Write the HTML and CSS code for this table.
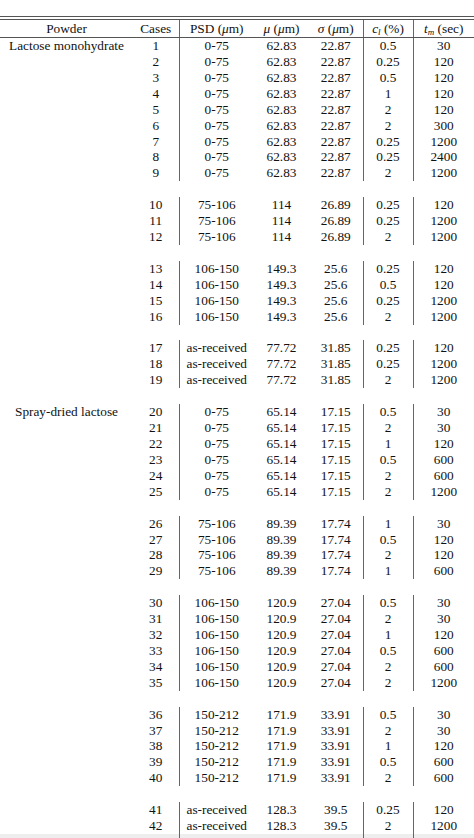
FILE: index.html
```html
<!DOCTYPE html>
<html>
<head>
<meta charset="utf-8">
<link rel="stylesheet" href="styles.css">
</head>
<body>
<div class="page">
  <div class="caption-clip"></div>
  <div class="rule-double"></div>
  <table class="tbl">
    <colgroup>
      <col class="w-powder"><col class="w-cases"><col class="w-psd"><col class="w-mu"><col class="w-sigma"><col class="w-cl"><col class="w-tm">
    </colgroup>
    <thead>
      <tr>
        <th>Powder</th><th>Cases</th><th class="vl">PSD (<i>μ</i>m)</th><th><i>μ</i> (<i>μ</i>m)</th><th><i>σ</i> (<i>μ</i>m)</th><th class="vl"><i>c<sub>l</sub></i> (%)</th><th class="vl"><i>t<sub>m</sub></i> (sec)</th>
      </tr>
    </thead>
    <tbody>
      <tr><td>Lactose monohydrate</td><td>1</td><td class="vl">0-75</td><td>62.83</td><td>22.87</td><td class="vl">0.5</td><td class="vl">30</td></tr>
      <tr><td></td><td>2</td><td class="vl">0-75</td><td>62.83</td><td>22.87</td><td class="vl">0.25</td><td class="vl">120</td></tr>
      <tr><td></td><td>3</td><td class="vl">0-75</td><td>62.83</td><td>22.87</td><td class="vl">0.5</td><td class="vl">120</td></tr>
      <tr><td></td><td>4</td><td class="vl">0-75</td><td>62.83</td><td>22.87</td><td class="vl">1</td><td class="vl">120</td></tr>
      <tr><td></td><td>5</td><td class="vl">0-75</td><td>62.83</td><td>22.87</td><td class="vl">2</td><td class="vl">120</td></tr>
      <tr><td></td><td>6</td><td class="vl">0-75</td><td>62.83</td><td>22.87</td><td class="vl">2</td><td class="vl">300</td></tr>
      <tr><td></td><td>7</td><td class="vl">0-75</td><td>62.83</td><td>22.87</td><td class="vl">0.25</td><td class="vl">1200</td></tr>
      <tr><td></td><td>8</td><td class="vl">0-75</td><td>62.83</td><td>22.87</td><td class="vl">0.25</td><td class="vl">2400</td></tr>
      <tr><td></td><td>9</td><td class="vl">0-75</td><td>62.83</td><td>22.87</td><td class="vl">2</td><td class="vl">1200</td></tr>
      <tr class="gap"><td colspan="7"></td></tr>
      <tr><td></td><td>10</td><td class="vl">75-106</td><td>114</td><td>26.89</td><td class="vl">0.25</td><td class="vl">120</td></tr>
      <tr><td></td><td>11</td><td class="vl">75-106</td><td>114</td><td>26.89</td><td class="vl">0.25</td><td class="vl">1200</td></tr>
      <tr><td></td><td>12</td><td class="vl">75-106</td><td>114</td><td>26.89</td><td class="vl">2</td><td class="vl">1200</td></tr>
      <tr class="gap"><td colspan="7"></td></tr>
      <tr><td></td><td>13</td><td class="vl">106-150</td><td>149.3</td><td>25.6</td><td class="vl">0.25</td><td class="vl">120</td></tr>
      <tr><td></td><td>14</td><td class="vl">106-150</td><td>149.3</td><td>25.6</td><td class="vl">0.5</td><td class="vl">120</td></tr>
      <tr><td></td><td>15</td><td class="vl">106-150</td><td>149.3</td><td>25.6</td><td class="vl">0.25</td><td class="vl">1200</td></tr>
      <tr><td></td><td>16</td><td class="vl">106-150</td><td>149.3</td><td>25.6</td><td class="vl">2</td><td class="vl">1200</td></tr>
      <tr class="gap"><td colspan="7"></td></tr>
      <tr><td></td><td>17</td><td class="vl">as-received</td><td>77.72</td><td>31.85</td><td class="vl">0.25</td><td class="vl">120</td></tr>
      <tr><td></td><td>18</td><td class="vl">as-received</td><td>77.72</td><td>31.85</td><td class="vl">0.25</td><td class="vl">1200</td></tr>
      <tr><td></td><td>19</td><td class="vl">as-received</td><td>77.72</td><td>31.85</td><td class="vl">2</td><td class="vl">1200</td></tr>
      <tr class="gap"><td colspan="7"></td></tr>
      <tr><td>Spray-dried lactose</td><td>20</td><td class="vl">0-75</td><td>65.14</td><td>17.15</td><td class="vl">0.5</td><td class="vl">30</td></tr>
      <tr><td></td><td>21</td><td class="vl">0-75</td><td>65.14</td><td>17.15</td><td class="vl">2</td><td class="vl">30</td></tr>
      <tr><td></td><td>22</td><td class="vl">0-75</td><td>65.14</td><td>17.15</td><td class="vl">1</td><td class="vl">120</td></tr>
      <tr><td></td><td>23</td><td class="vl">0-75</td><td>65.14</td><td>17.15</td><td class="vl">0.5</td><td class="vl">600</td></tr>
      <tr><td></td><td>24</td><td class="vl">0-75</td><td>65.14</td><td>17.15</td><td class="vl">2</td><td class="vl">600</td></tr>
      <tr><td></td><td>25</td><td class="vl">0-75</td><td>65.14</td><td>17.15</td><td class="vl">2</td><td class="vl">1200</td></tr>
      <tr class="gap"><td colspan="7"></td></tr>
      <tr><td></td><td>26</td><td class="vl">75-106</td><td>89.39</td><td>17.74</td><td class="vl">1</td><td class="vl">30</td></tr>
      <tr><td></td><td>27</td><td class="vl">75-106</td><td>89.39</td><td>17.74</td><td class="vl">0.5</td><td class="vl">120</td></tr>
      <tr><td></td><td>28</td><td class="vl">75-106</td><td>89.39</td><td>17.74</td><td class="vl">2</td><td class="vl">120</td></tr>
      <tr><td></td><td>29</td><td class="vl">75-106</td><td>89.39</td><td>17.74</td><td class="vl">1</td><td class="vl">600</td></tr>
      <tr class="gap"><td colspan="7"></td></tr>
      <tr><td></td><td>30</td><td class="vl">106-150</td><td>120.9</td><td>27.04</td><td class="vl">0.5</td><td class="vl">30</td></tr>
      <tr><td></td><td>31</td><td class="vl">106-150</td><td>120.9</td><td>27.04</td><td class="vl">2</td><td class="vl">30</td></tr>
      <tr><td></td><td>32</td><td class="vl">106-150</td><td>120.9</td><td>27.04</td><td class="vl">1</td><td class="vl">120</td></tr>
      <tr><td></td><td>33</td><td class="vl">106-150</td><td>120.9</td><td>27.04</td><td class="vl">0.5</td><td class="vl">600</td></tr>
      <tr><td></td><td>34</td><td class="vl">106-150</td><td>120.9</td><td>27.04</td><td class="vl">2</td><td class="vl">600</td></tr>
      <tr><td></td><td>35</td><td class="vl">106-150</td><td>120.9</td><td>27.04</td><td class="vl">2</td><td class="vl">1200</td></tr>
      <tr class="gap"><td colspan="7"></td></tr>
      <tr><td></td><td>36</td><td class="vl">150-212</td><td>171.9</td><td>33.91</td><td class="vl">0.5</td><td class="vl">30</td></tr>
      <tr><td></td><td>37</td><td class="vl">150-212</td><td>171.9</td><td>33.91</td><td class="vl">2</td><td class="vl">30</td></tr>
      <tr><td></td><td>38</td><td class="vl">150-212</td><td>171.9</td><td>33.91</td><td class="vl">1</td><td class="vl">120</td></tr>
      <tr><td></td><td>39</td><td class="vl">150-212</td><td>171.9</td><td>33.91</td><td class="vl">0.5</td><td class="vl">600</td></tr>
      <tr><td></td><td>40</td><td class="vl">150-212</td><td>171.9</td><td>33.91</td><td class="vl">2</td><td class="vl">600</td></tr>
      <tr class="gap"><td colspan="7"></td></tr>
      <tr><td></td><td>41</td><td class="vl">as-received</td><td>128.3</td><td>39.5</td><td class="vl">0.25</td><td class="vl">120</td></tr>
      <tr><td></td><td>42</td><td class="vl">as-received</td><td>128.3</td><td>39.5</td><td class="vl">2</td><td class="vl">1200</td></tr>
      <tr class="tail"><td></td><td></td><td class="vl"></td><td></td><td></td><td class="vl"></td><td class="vl"></td></tr>
    </tbody>
  </table>
</div>
</body>
</html>
```
FILE: styles.css
```css
html, body {
  margin: 0;
  padding: 0;
  background: #ffffff;
}

.page {
  width: 474px;
  height: 838px;
  overflow: hidden;
  font-family: "Liberation Serif", "Times New Roman", serif;
  font-size: 13.3px;
  color: #111111;
}

.caption-clip {
  height: 16px;
}

.rule-double {
  height: 2px;
  border-top: 1px solid #555555;
  border-bottom: 1px solid #555555;
}

.tbl {
  width: 474px;
  table-layout: fixed;
  border-collapse: collapse;
  border-spacing: 0;
}

.w-powder { width: 133px; }
.w-cases { width: 46px; }
.w-psd { width: 75px; }
.w-mu { width: 55px; }
.w-sigma { width: 54px; }
.w-cl { width: 50px; }
.w-tm { width: 61px; }

.tbl th,
.tbl td {
  padding: 0;
  text-align: center;
  white-space: nowrap;
  font-weight: normal;
  vertical-align: middle;
}

.tbl th {
  height: 17px;
  line-height: 17px;
  border-bottom: 1px solid #555555;
}

.tbl td {
  height: 15.92px;
  line-height: 15.92px;
}

.tbl .vl {
  border-left: 1px solid #666666;
}

.tbl sub {
  font-size: 9px;
  line-height: 0;
  vertical-align: -2px;
}

.tbl tr.gap td {
  border: none;
}

.tbl tr.tail td {
  background: #eeeeee;
}
```
